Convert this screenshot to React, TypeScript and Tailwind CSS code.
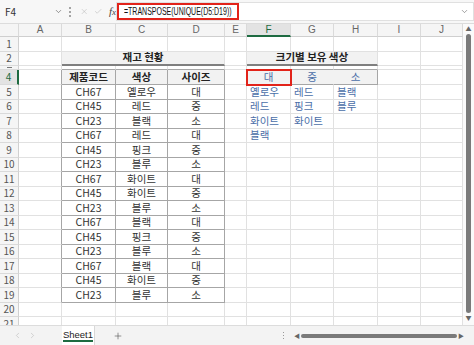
import React from 'react'
import { ChevronDown, X, Check, Plus, ChevronLeft, ChevronRight } from 'lucide-react'

const colW = ['w-[19px]', 'w-[43px]', 'w-[54px]', 'w-[52px]', 'w-[57px]', 'w-[22px]', 'w-[44px]', 'w-[43px]', 'w-[44px]', 'w-[43px]', 'w-[42px]']
const letters = ['', 'A', 'B', 'C', 'D', 'E', 'F', 'G', 'H', 'I', 'J']

const stock = [
  ['CH67', '옐로우', '대'],
  ['CH45', '레드', '중'],
  ['CH23', '블랙', '소'],
  ['CH67', '레드', '대'],
  ['CH45', '핑크', '중'],
  ['CH23', '블루', '소'],
  ['CH67', '화이트', '대'],
  ['CH45', '화이트', '중'],
  ['CH23', '블루', '소'],
  ['CH67', '블랙', '대'],
  ['CH45', '핑크', '중'],
  ['CH23', '블루', '소'],
  ['CH67', '블랙', '대'],
  ['CH45', '화이트', '중'],
  ['CH23', '블루', '소'],
]

const spill = [
  ['옐로우', '레드', '블랙'],
  ['레드', '핑크', '블루'],
  ['화이트', '화이트', ''],
  ['블랙', '', ''],
]

const R = { grid: 'border-r-[#e1e1e1]', dark: 'border-r-[#a6a6a6]', fill: 'border-r-[#f2f2f2]' }
const B = { grid: 'border-b border-b-[#e1e1e1]', dark: 'border-b border-b-[#a6a6a6]', thick: 'border-b-2 border-b-[#7f7f7f]' }

type Edge = 'grid' | 'dark' | 'fill'

const Cell = ({ w, r = 'grid', b = 'grid', className = '', children }: { w: string, r?: Edge, b?: 'grid' | 'dark' | 'thick', className?: string, children?: React.ReactNode }) => (
  <div className={`${w} shrink-0 h-full border-r ${R[r]} ${B[b]} flex items-center whitespace-nowrap leading-none ${className}`}>
    {children}
  </div>
)

const RowHead = ({ label, active = false }: { label: React.ReactNode, active?: boolean }) => (
  <div className={`w-[19px] shrink-0 h-full flex items-center justify-center text-[10px] leading-none border-b border-b-[#dadada] ${active ? 'bg-[#e3e3e3] border-r-2 border-r-[#1e6b41] text-[#1e6b41]' : 'bg-[#f5f5f5] border-r border-r-[#d0d0d0] text-[#555]'}`}>
    {label}
  </div>
)

const Row = ({ h, children }: { h: string, children: React.ReactNode }) => (
  <div className={`flex shrink-0 ${h}`}>{children}</div>
)

export default function App() {
  return (
    <div className="w-[474px] h-[345px] overflow-hidden bg-white flex flex-col font-['Noto_Sans_CJK_KR','Noto_Sans',sans-serif] text-[#333]">
      {/* formula bar */}
      <div className="h-[24px] shrink-0 flex items-center bg-[#f7f7f7] border-b border-[#dcdcdc]">
        <div className="w-[66px] h-full flex items-center justify-between pl-[5px] pr-[3px] text-[10px] text-[#333]">
          <span>F4</span>
          <ChevronDown size={9} strokeWidth={1.6} className="text-[#555]" />
        </div>
        <div className="flex flex-col gap-[2px] w-[8px] items-center">
          <span className="w-[2px] h-[2px] rounded-full bg-[#888]" />
          <span className="w-[2px] h-[2px] rounded-full bg-[#888]" />
          <span className="w-[2px] h-[2px] rounded-full bg-[#888]" />
        </div>
        <div className="flex items-center gap-[6px] pl-[6px] w-[42px] text-[#aaa]">
          <X size={11} strokeWidth={1.3} />
          <Check size={11} strokeWidth={1.3} />
          <span className="italic font-['Liberation_Serif',serif] text-[11px] text-[#444]">f<span className="text-[9px]">x</span></span>
        </div>
        <div className="flex-1 h-[19px] bg-white border border-[#e0e0e0] flex items-center justify-between pr-[4px]">
          <div className="w-[122px] h-full border-2 border-[#e2231a] flex items-center pl-[5px] overflow-hidden">
            <span className="text-[10px] leading-none font-['Liberation_Sans',sans-serif] font-medium text-[#111] scale-x-[0.7] origin-left whitespace-nowrap">=TRANSPOSE(UNIQUE(D5:D19))</span>
          </div>
          <ChevronDown size={9} strokeWidth={1.6} className="text-[#666]" />
        </div>
      </div>

      {/* sheet + vertical scrollbar */}
      <div className="flex h-[301px] shrink-0">
        <div className="w-[463px] h-full overflow-hidden flex flex-col text-[10.5px]">
          {/* column headers */}
          <div className="flex h-[13px] shrink-0">
            {letters.map((l, i) => (
              <div key={i} className={`${colW[i]} shrink-0 h-full flex items-center justify-center text-[10px] leading-none border-r ${l === 'F' ? 'bg-[#e3e3e3] border-b-2 border-b-[#1e6b41] text-[#1e6b41]' : 'bg-[#f5f5f5] border-b border-b-[#cfcfcf] text-[#666]'} border-r-[#dadada] font-['Liberation_Sans',sans-serif]`}>
                {l}
              </div>
            ))}
          </div>

          {/* row 1 */}
          <Row h="h-[14.5px]">
            <RowHead label="1" />
            {colW.slice(1).map((w, i) => <Cell key={i} w={w} />)}
          </Row>

          {/* row 2 */}
          <Row h="h-[14px]">
            <RowHead label="2" />
            <Cell w={colW[1]} />
            <Cell w="w-[163px]" b="thick" className="bg-[#f2f2f2] justify-center font-bold text-[#222]">재고 현황</Cell>
            <Cell w={colW[5]} />
            <Cell w="w-[131px]" b="thick" className="bg-[#f2f2f2] justify-center font-bold text-[#222]">크기별 보유 색상</Cell>
            <Cell w={colW[9]} />
            <Cell w={colW[10]} />
          </Row>

          {/* row 3 (collapsed) */}
          <Row h="h-[4px]">
            <RowHead label={<span className="w-[5px] h-px bg-[#777]" />} />
            <Cell w={colW[1]} />
            <Cell w={colW[2]} b="dark" />
            <Cell w={colW[3]} b="dark" />
            <Cell w={colW[4]} b="dark" />
            <Cell w={colW[5]} />
            <Cell w={colW[6]} b="dark" />
            <Cell w={colW[7]} b="dark" />
            <Cell w={colW[8]} b="dark" />
            <Cell w={colW[9]} />
            <Cell w={colW[10]} />
          </Row>

          {/* row 4 */}
          <Row h="h-[15.5px]">
            <RowHead label="4" active />
            <Cell w={colW[1]} r="dark" />
            <Cell w={colW[2]} r="dark" b="dark" className="bg-[#f2f2f2] justify-center font-bold text-[#222]">제품코드</Cell>
            <Cell w={colW[3]} r="dark" b="dark" className="bg-[#f2f2f2] justify-center font-bold text-[#222]">색상</Cell>
            <Cell w={colW[4]} r="dark" b="dark" className="bg-[#f2f2f2] justify-center font-bold text-[#222]">사이즈</Cell>
            <Cell w={colW[5]} r="dark" />
            <Cell w={colW[6]} r="fill" b="dark" className="bg-[#f2f2f2] justify-center text-[#4a6ea8] relative z-10 outline-2 outline-[#e2231a] -outline-offset-1">대</Cell>
            <Cell w={colW[7]} r="fill" b="dark" className="bg-[#f2f2f2] justify-center text-[#4a6ea8]">중</Cell>
            <Cell w={colW[8]} r="dark" b="dark" className="bg-[#f2f2f2] justify-center text-[#4a6ea8]">소</Cell>
            <Cell w={colW[9]} />
            <Cell w={colW[10]} />
          </Row>

          {/* rows 5-19 */}
          {stock.map((row, i) => (
            <Row key={i} h="h-[14.5px]">
              <RowHead label={i + 5} />
              <Cell w={colW[1]} r="dark" />
              {row.map((v, j) => (
                <Cell key={j} w={colW[j + 2]} r="dark" b="dark" className="justify-center">{v}</Cell>
              ))}
              <Cell w={colW[5]} />
              {[0, 1, 2].map(j => (
                <Cell key={j} w={colW[j + 6]} className="pl-[3px] text-[#4a6ea8]">{spill[i]?.[j] ?? ''}</Cell>
              ))}
              <Cell w={colW[9]} />
              <Cell w={colW[10]} />
            </Row>
          ))}

          {/* rows 20-21 */}
          {[20, 21].map(n => (
            <Row key={n} h="h-[14.5px]">
              <RowHead label={n} />
              {colW.slice(1).map((w, i) => <Cell key={i} w={w} />)}
            </Row>
          ))}
        </div>

        {/* vertical scrollbar */}
        <div className="w-[11px] h-full bg-[#fafafa] flex flex-col items-center pt-[2px] pb-[4px] gap-[2px]">
          <span className="text-[6px] leading-none text-[#666]">▲</span>
          <div className="w-[5px] flex-1 rounded-full bg-[#7a7a7a]" />
          <span className="text-[6px] leading-none text-[#666]">▼</span>
        </div>
      </div>

      {/* sheet tabs */}
      <div className="flex-1 flex items-center bg-[#f3f3f3] border-t border-[#dcdcdc] text-[10px]">
        <div className="w-[62px] flex items-center gap-[6px] pl-[13px] text-[#b5b5b5]">
          <ChevronLeft size={9} strokeWidth={1.5} />
          <ChevronRight size={9} strokeWidth={1.5} />
        </div>
        <div className="w-[33px] h-full bg-white flex items-center justify-center border-r border-[#d8d8d8]">
          <span className="border-b-2 border-[#1e6b41] leading-[11px] font-['Liberation_Sans',sans-serif] text-[9.5px] text-[#222]">Sheet1</span>
        </div>
        <div className="w-[46px] flex justify-center text-[#555]">
          <Plus size={10} strokeWidth={1.5} />
        </div>
        <div className="w-[145px] flex justify-end pr-[2px]">
          <div className="flex flex-col gap-[1.5px]">
            <span className="w-[1.5px] h-[1.5px] bg-[#999]" />
            <span className="w-[1.5px] h-[1.5px] bg-[#999]" />
            <span className="w-[1.5px] h-[1.5px] bg-[#999]" />
          </div>
        </div>
        <div className="w-[178px] flex items-center gap-[1px] pl-[8px]">
          <span className="text-[6px] leading-none text-[#666]">◀</span>
          <div className="flex-1 h-[4px] rounded-full bg-[#7a7a7a]" />
          <span className="text-[6px] leading-none text-[#666]">▶</span>
        </div>
      </div>
    </div>
  )
}
